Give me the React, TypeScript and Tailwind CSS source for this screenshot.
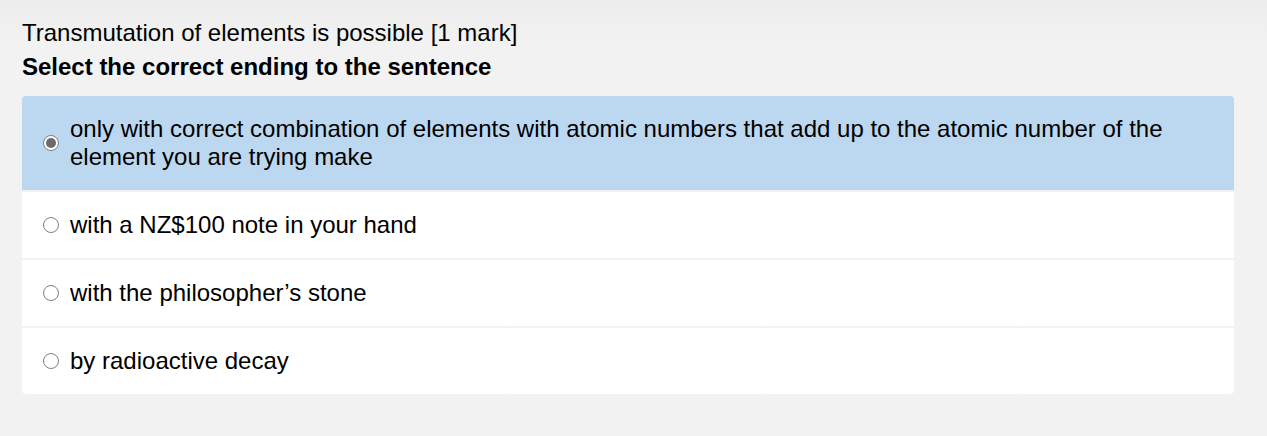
import React, { useState } from 'react';

const options = [
  'only with correct combination of elements with atomic numbers that add up to the atomic number of the element you are trying make',
  'with a NZ$100 note in your hand',
  'with the philosopher\u2019s stone',
  'by radioactive decay',
];

function Radio({ checked }: { checked: boolean }) {
  return (
    <span className="flex h-[16px] w-[16px] shrink-0 items-center justify-center rounded-full border border-[#7f7f7f] bg-white">
      {checked && <span className="h-[10px] w-[10px] rounded-full bg-[#6b6b6b]" />}
    </span>
  );
}

export default function App() {
  const [selected, setSelected] = useState(0);

  return (
    <div
      className="min-h-[436px] w-full bg-gradient-to-b from-[#ececec] to-[#f2f2f2] to-[40px] px-[22px] pt-[19px] text-black"
      style={{ fontFamily: '"Liberation Sans", Arial, sans-serif' }}
    >
      <p className="text-[24px] leading-[28px]">Transmutation of elements is possible [1 mark]</p>
      <p className="mt-[6px] text-[24px] font-bold leading-[28px]">Select the correct ending to the sentence</p>

      <div className="mt-[15px] flex w-[1212px] flex-col gap-[2px] overflow-hidden rounded-[4px]">
        {options.map((text, i) => (
          <div
            key={i}
            onClick={() => setSelected(i)}
            className={`flex cursor-pointer items-center gap-[11px] py-[19px] pl-[21px] pr-[40px] ${
              selected === i ? 'bg-[#bcd8f0]' : 'bg-white'
            }`}
          >
            <Radio checked={selected === i} />
            <span className="text-[24px] leading-[28px]">{text}</span>
          </div>
        ))}
      </div>
    </div>
  );
}
